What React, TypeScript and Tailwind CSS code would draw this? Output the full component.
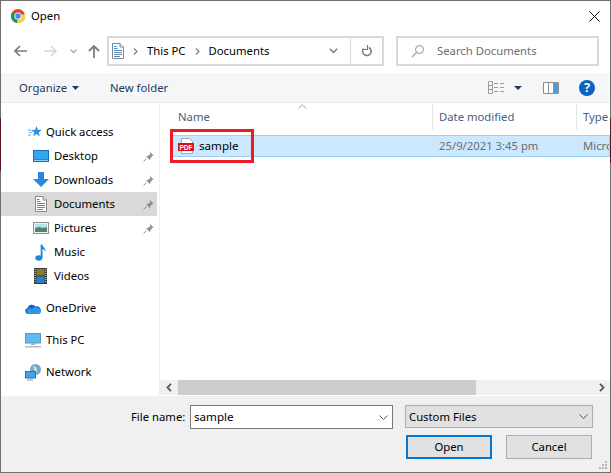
import React from "react";

const Chrome = () => (
  <svg width="16" height="16" viewBox="0 0 16 16">
    <circle cx="8" cy="8" r="7" fill="#DB4437" />
    <path d="M8 8 L2 4.500 A7 7 0 0 0 7 15 Z" fill="#0F9D58" />
    <path d="M8 8 L14.800 6 A7 7 0 0 1 7 15 Z" fill="#FFCD40" />
    <circle cx="8" cy="8" r="3.600" fill="#fff" />
    <circle cx="8" cy="8" r="2.700" fill="#4285F4" />
  </svg>
);

const DocIcon = () => (
  <svg width="12" height="16" viewBox="0 0 12 16">
    <path d="M.5 .5h7.500l3.500 3.500v11.500H.5z" fill="#fff" stroke="#7f8a94" />
    <path d="M8 .5v3.500h3.500" fill="#e6e9ec" stroke="#7f8a94" />
    <path d="M2 3.500h2.500M2 5.500h3.500" stroke="#2f8fdc" strokeWidth="1" />
    <path d="M2 7.500h8M2 9.500h8M2 11.500h8M2 13.500h6" stroke="#5f86a8" strokeWidth="1" />
  </svg>
);

const Pin = () => (
  <svg width="11" height="11" viewBox="0 0 11 11">
    <path d="M6.500 .5l4 4-1.200.5-2 2.500-.3 1.800-4-4 1.800-.3 2.500-2z" fill="#8f8f8f" />
    <path d="M3.500 7.500L.5 10.500" stroke="#8f8f8f" />
  </svg>
);

const SideRow = ({ icon, label, pin, active, indent }: { icon: React.ReactNode; label: string; pin?: boolean; active?: boolean; indent?: boolean }) => (
  <div className={`h-6 mr-[2px] flex items-center ${active ? "bg-[#d9d9d9]" : ""} ${indent ? "pl-[32px]" : "pl-[24px]"}`}>
    <div className="w-[21px] h-6 flex items-center justify-start shrink-0">{icon}</div>
    <span className="flex-1 text-black">{label}</span>
    {pin && <span className="mr-[3px] flex"><Pin /></span>}
  </div>
);

export default function App() {
  return (
    <div className="w-[611px] h-[473px] border border-[#6f6f6f] bg-white flex flex-col relative text-[11.3px] leading-none text-black" style={{ fontFamily: '"Noto Sans", "Open Sans", sans-serif' }}>
      <div className="absolute left-[-1px] top-[117px] w-px h-[53px] bg-[#5c1a20]" />
      <div className="absolute right-[-1px] top-[117px] w-px h-[45px] bg-[#5c1a20]" />

      {/* Title */}
      <div className="h-[30px] shrink-0 flex items-center pl-[9px] pr-[10px]">
        <Chrome />
        <span className="ml-[5px]">Open</span>
        <svg className="ml-auto" width="11" height="11" viewBox="0 0 11 11"><path d="M.5 .5l10 10M10.500 .5l-10 10" stroke="#111" strokeWidth="1" /></svg>
      </div>

      {/* Nav */}
      <div className="h-[42px] shrink-0 flex items-start pt-[5px] pl-[13px] pr-[12px]">
        <div className="w-[93px] h-[30px] flex items-center shrink-0">
          <svg width="13" height="12" viewBox="0 0 13 12"><path d="M6 1L1 6l5 5M1.500 6H13" fill="none" stroke="#7d7d7d" strokeWidth="1.700" /></svg>
          <svg className="ml-[17px]" width="13" height="12" viewBox="0 0 13 12"><path d="M7 1l5 5-5 5M11.500 6H0" fill="none" stroke="#d6d6d6" strokeWidth="1.700" /></svg>
          <svg className="ml-[13px]" width="7" height="5" viewBox="0 0 7 5"><path d="M.5 .5L3.500 3.500 6.500 .5" fill="none" stroke="#a8a8a8" strokeWidth="1.300" /></svg>
          <svg className="ml-[11px]" width="12" height="13" viewBox="0 0 12 13"><path d="M1 6l5-5 5 5M6 1.500V13" fill="none" stroke="#7d7d7d" strokeWidth="1.800" /></svg>
        </div>
        <div className="w-[277px] h-[30px] border-2 border-[#d9d9d9] flex items-center shrink-0">
          <div className="ml-[3px] flex"><DocIcon /></div>
          <svg className="ml-[9px]" width="5" height="7" viewBox="0 0 5 7"><path d="M1 .5l3 3-3 3" fill="none" stroke="#808080" strokeWidth="1.200" /></svg>
          <span className="ml-[9px]">This PC</span>
          <svg className="ml-[9px]" width="5" height="7" viewBox="0 0 5 7"><path d="M1 .5l3 3-3 3" fill="none" stroke="#808080" strokeWidth="1.200" /></svg>
          <span className="ml-[9px]">Documents</span>
          <div className="ml-auto h-full w-[33px] flex items-center justify-center">
            <svg width="9" height="6" viewBox="0 0 9 6"><path d="M.8 .8l3.700 3.700L8.200 .8" fill="none" stroke="#7a7a7a" strokeWidth="1.500" /></svg>
          </div>
          <div className="h-full w-[32px] border-l border-[#d9d9d9] flex items-center justify-center">
            <svg width="11" height="12" viewBox="0 0 11 12"><path d="M3 2.500A4.300 4.300 0 1 0 8.500 3.500" fill="none" stroke="#7a7a7a" strokeWidth="1.500" transform="matrix(-1 0 0 1 11 0)" /><path d="M6.500 0v4.500H2" fill="none" stroke="#7a7a7a" strokeWidth="1.200" /></svg>
          </div>
        </div>
        <div className="ml-[12px] w-[203px] h-[30px] border-2 border-[#d9d9d9] flex items-center shrink-0">
          <svg className="ml-[13px]" width="14" height="14" viewBox="0 0 14 14"><circle cx="8.500" cy="5.500" r="4" fill="none" stroke="#8a8f9a" /><path d="M5.500 8.500L1 13" stroke="#c9948f" strokeWidth="1.200" /></svg>
          <span className="ml-[12px] text-[#6d6d6d]">Search Documents</span>
        </div>
      </div>

      {/* Toolbar */}
      <div className="h-[30px] shrink-0 bg-[#f5f6f7] border-b border-[#ececec] flex items-center pl-[18px] pr-[15px] text-[#1e395b]">
        <span className="w-[48px]">Organize</span>
        <svg className="ml-[5px]" width="7" height="4" viewBox="0 0 7 4"><path d="M0 0h7L3.500 4z" fill="#1e395b" /></svg>
        <span className="ml-[31px]">New folder</span>
        <div className="ml-auto flex items-center">
          <svg width="16" height="13" viewBox="0 0 16 13"><path d="M.5 .5h4v12h-4zM1 4.500h3M1 8.500h3" fill="none" stroke="#9c9c9c" /><path d="M6 2.500h4M12 2.500h4M6 6.500h4M12 6.500h4M6 10.500h4M12 10.500h4" stroke="#9c9c9c" /></svg>
          <svg className="ml-[10px]" width="8" height="4" viewBox="0 0 8 4"><path d="M0 0h8L4 4z" fill="#1e395b" /></svg>
          <svg className="ml-[21px]" width="16" height="12" viewBox="0 0 16 12"><path d="M.5 .5h15v11H.5z" fill="#fff" stroke="#8d8d8d" /><rect x="10" y="1" width="5" height="10" fill="#4a9be3" /><path d="M5.500 1v10" stroke="#8d8d8d" /></svg>
          <div className="ml-[20px] w-4 h-4 rounded-full bg-[#0a63bd] text-white font-bold text-[13px] flex items-center justify-center">?</div>
        </div>
      </div>

      {/* Body */}
      <div className="flex-1 min-h-0 flex">
        <div className="w-[158px] shrink-0 pt-[17px]">
          <SideRow label="Quick access" icon={<svg className="ml-[3px]" width="14" height="12" viewBox="0 0 14 12"><path d="M8.500 0l1.300 3.700 4 .2-3.100 2.500 1.100 4-3.300-2.300-3.300 2.300 1.100-4L3.200 3.900l4-.2z" fill="#2f90e0" /><path d="M0 4h3M1 6.500h2.500M0 9h3" stroke="#5ea9e6" /></svg>} />
          <SideRow indent pin label="Desktop" icon={<svg width="16" height="12" viewBox="0 0 16 12"><rect width="16" height="12" fill="#0f6fc0" /><rect x="1" y="1" width="14" height="8.500" fill="#35a6f0" /><rect x="1" y="10" width="14" height="1" fill="#8fd0f8" /></svg>} />
          <SideRow indent pin label="Downloads" icon={<svg width="16" height="16" viewBox="0 0 16 16"><path d="M5 0h6v7h5l-8 8-8-8h5z" fill="#2f86d8" /></svg>} />
          <SideRow indent pin active label="Documents" icon={<span className="ml-[2px] flex"><DocIcon /></span>} />
          <SideRow indent pin label="Pictures" icon={<svg width="16" height="12" viewBox="0 0 16 12"><rect x=".5" y=".5" width="15" height="11" fill="#eaf3f8" stroke="#8e8e8e" /><rect x="2" y="2" width="12" height="4" fill="#b9dcef" /><path d="M2 6l4-1 4 1 4-1v5H2z" fill="#4f8468" /></svg>} />
          <SideRow indent label="Music" icon={<svg className="ml-[2px]" width="11" height="17" viewBox="0 0 11 17"><ellipse cx="3.800" cy="14" rx="3.500" ry="2.800" fill="#1b86dc" /><path d="M5.700 14V.5h1.500c.3 2.500 3.800 3.500 3.300 7.500-.5-1.800-2-2.800-3-3V14z" fill="#1b86dc" /></svg>} />
          <SideRow indent label="Videos" icon={<svg className="ml-[1px]" width="13" height="16" viewBox="0 0 13 16"><rect width="13" height="16" fill="#3b3b3b" /><rect x="2.500" y="1" width="8" height="6.500" fill="#8a7a30" /><rect x="2.500" y="8.500" width="8" height="6.500" fill="#2b7fc4" /><path d="M1.200 1v14M11.800 1v14" stroke="#ddd" strokeDasharray="1 1" /></svg>} />
          <div className="h-2" />
          <SideRow label="OneDrive" icon={<svg width="16" height="11" viewBox="0 0 16 11"><path d="M3 11a3 3 0 0 1-.5-5.900A4.500 4.500 0 0 1 10.500 3.500 3.500 3.500 0 0 1 13 11z" fill="#0f62b8" /><path d="M3 11h10a3 3 0 0 0 0-6 4 4 0 0 0-6 1 3 3 0 0 0-4 5z" fill="#2a97e8" /></svg>} />
          <div className="h-2" />
          <SideRow label="This PC" icon={<svg width="16" height="15" viewBox="0 0 16 15"><rect x=".5" y=".5" width="15" height="9.500" fill="#5bbcf5" stroke="#6f94a9" /><path d="M6 10h4v2H6z" fill="#9bb2c0" /><rect y="13" width="16" height="1.500" fill="#b1bec7" /></svg>} />
          <div className="h-2" />
          <SideRow label="Network" icon={<svg width="16" height="17" viewBox="0 0 16 17"><circle cx="10.500" cy="5.500" r="5.500" fill="#7aa7c2" /><path d="M8 2c3 0 5 3 3 8" fill="#d7e7ef" /><rect x=".5" y="7.500" width="10" height="6.500" fill="#3fa6ea" stroke="#2a6f9e" /><rect x="2" y="15.500" width="6" height="1" fill="#7f98a8" /></svg>} />
        </div>

        <div className="w-px bg-[#f0f0f0] shrink-0" />

        <div className="flex-1 min-w-0 flex flex-col relative">
          <div className="h-[27px] shrink-0 flex relative text-[#4c607a] pt-[1px]">
            <div className="w-[273px] pl-[18px] flex items-center border-r border-[#e5e5e5]">Name</div>
            <div className="w-[144px] pl-[6px] flex items-center border-r border-[#e5e5e5]">Date modified</div>
            <div className="pl-[6px] flex items-center">Type</div>
            <svg className="absolute left-[138px] top-[1px]" width="9" height="5" viewBox="0 0 9 5"><path d="M.5 4.500l4-3.500 4 3.500" fill="none" stroke="#9aa0a6" /></svg>
          </div>
          <div className="flex-1 pt-[5px]">
            <div className="ml-[12px] h-[22px] bg-[#cce8ff] border border-[#99d1ff] flex items-center overflow-hidden">
              <div className="w-[266px] shrink-0 flex items-center">
                <svg className="ml-[5px]" width="17" height="16" viewBox="0 0 17 16">
                  <path d="M3.500 .5h8l3 3v12h-11z" fill="#fff" stroke="#a9a9a9" />
                  <rect y="5" width="16" height="8" fill="#d5101f" />
                  <text x="8" y="11.500" textAnchor="middle" fontSize="6.500" fontWeight="700" fill="#fff" fontFamily="Liberation Sans, sans-serif">PDF</text>
                </svg>
                <span className="ml-[4px] text-[11.600px]">sample</span>
              </div>
              <span className="w-[144px] shrink-0 text-[#6d6d6d]">25/9/2021 3:45 pm</span>
              <span className="text-[#6d6d6d]">Micro</span>
            </div>
          </div>
          <div className="h-[15px] mb-px shrink-0 bg-[#f0f0f0] flex items-stretch">
            <div className="w-[18px] flex items-center justify-center">
              <svg width="6" height="9" viewBox="0 0 6 9"><path d="M5 .8L1.500 4.500 5 8.200" fill="none" stroke="#555" strokeWidth="1.800" /></svg>
            </div>
            <div className="w-[298px] bg-[#cdcdcd]" />
            <div className="flex-1" />
            <div className="w-[17px] flex items-center justify-center">
              <svg width="6" height="9" viewBox="0 0 6 9"><path d="M1 .8l3.500 3.700L1 8.200" fill="none" stroke="#555" strokeWidth="1.800" /></svg>
            </div>
          </div>
          <div className="absolute left-[10px] top-[26px] w-[84px] h-[34px] border-[3px] border-[#ed1c24]" />
        </div>
      </div>

      {/* Bottom */}
      <div className="h-[76px] shrink-0 bg-[#f0f0f0] relative pt-[9px]">
        <div className="flex items-center h-[24px]">
          <span className="ml-[130px] w-[59px]">File name:</span>
          <div className="w-[203px] h-[24px] bg-white border border-[#7a7a7a] flex items-center pl-[3px]">
            <span className="text-[11.600px]">sample</span>
            <div className="ml-auto w-[17px] flex justify-center">
              <svg width="9" height="5" viewBox="0 0 9 5"><path d="M.5 .5l4 4 4-4" fill="none" stroke="#555" /></svg>
            </div>
          </div>
          <div className="ml-[12px] w-[188px] h-[23px] self-start bg-[#e1e1e1] border border-[#adadad] flex items-center pl-[3px]">
            <span>Custom Files</span>
            <div className="ml-auto w-[17px] flex justify-center">
              <svg width="9" height="5" viewBox="0 0 9 5"><path d="M.5 .5l4 4 4-4" fill="none" stroke="#555" /></svg>
            </div>
          </div>
        </div>
        <div className="flex mt-[6px] ml-[405px] gap-[14px]">
          <div className="w-[86px] h-[24px] bg-[#e1e1e1] border-2 border-[#0078d7] flex items-center justify-center">Open</div>
          <div className="w-[86px] h-[24px] bg-[#e1e1e1] border border-[#adadad] flex items-center justify-center">Cancel</div>
        </div>
        <svg className="absolute right-[2px] bottom-[2px]" width="9" height="9" viewBox="0 0 9 9" fill="#b5b5b5"><rect x="6" y="0" width="2" height="2" /><rect x="3" y="3" width="2" height="2" /><rect x="6" y="3" width="2" height="2" /><rect x="0" y="6" width="2" height="2" /><rect x="3" y="6" width="2" height="2" /><rect x="6" y="6" width="2" height="2" /></svg>
      </div>
    </div>
  );
}
